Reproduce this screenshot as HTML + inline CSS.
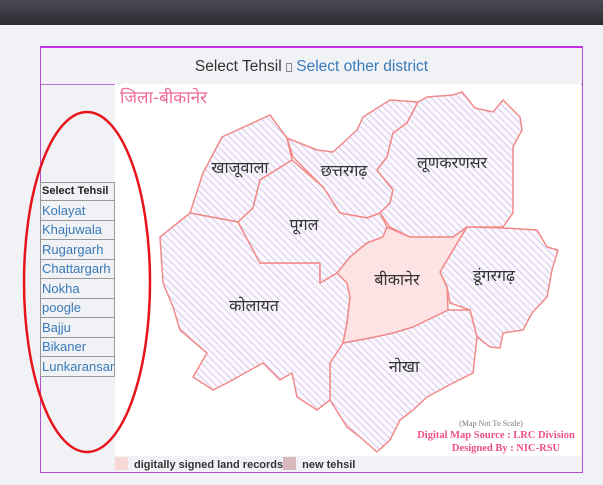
<!DOCTYPE html>
<html><head><meta charset="utf-8"><style>
*{margin:0;padding:0;box-sizing:border-box}
body{width:603px;height:485px;background:#f0f2f5;font-family:"Liberation Sans",sans-serif;position:relative;overflow:hidden}
.hdr{position:absolute;left:0;top:0;width:603px;height:25px;background:linear-gradient(#4a4b55,#2c2d33)}
.box{position:absolute;left:40px;top:46px;width:543px;height:427px;border:1px solid #b44fd0;border-top:2px solid #c030e0}
.title{position:absolute;left:0;top:0;width:541px;height:37px;border-bottom:1px solid #c070d8;text-align:center;font-size:15.5px;line-height:37px;color:#333}
.title a{color:#3a7ab8;text-decoration:none}
.map{position:absolute;left:115px;top:84px;width:466px;height:372px;background:#fff}
table{position:absolute;left:40px;top:182px;border-collapse:collapse;font-size:13px;table-layout:fixed;width:75px}
td{border:1px solid #999;height:19.5px;padding:0 1px;color:#3a7ab8;line-height:17px;white-space:nowrap;overflow:visible}
td.h{font-weight:bold;color:#222;font-size:11px;height:17px}
.leg{position:absolute;left:115px;top:457px;font-size:11px;font-weight:bold;color:#333}
</style></head><body>
<div class="hdr"></div>
<div class="box"><div class="title">Select Tehsil <span style="font-size:9px;border:1px solid #888;display:inline-block;width:6px;height:9px;vertical-align:-1px"></span> <a>Select other district</a></div></div>
<div class="map"></div>
<svg style="position:absolute;left:0;top:0" width="603" height="485">
<defs><pattern id="h" width="5" height="5" patternUnits="userSpaceOnUse" patternTransform="rotate(-45)"><rect width="5" height="5" fill="#fbf9fd"/><line x1="0" y1="0" x2="0" y2="5" stroke="#d6c8ec" stroke-width="2"/></pattern></defs>
<g stroke="#f28a8a" stroke-width="1.5" stroke-linejoin="round">
<polygon fill="url(#h)" points="190,213 203,173 222,137 270,115 287,138 292,160 260,180 253,208 238,222"/>
<polygon fill="url(#h)" points="287,138 317,150 333,152 357,130 363,117 390,100 418,102 407,123 393,133 387,157 377,170 393,190 390,203 380,213 367,218 340,213 323,187 293,157"/>
<polygon fill="url(#h)" points="418,102 427,97 453,95 462,92 475,108 493,112 503,100 520,117 522,130 513,147 513,213 503,227 467,227 453,237 410,237 390,227 380,213 390,203 393,190 377,170 387,157 393,133 407,123"/>
<polygon fill="url(#h)" points="467,227 503,228 537,230 547,247 558,250 552,270 547,297 532,313 523,330 503,333 500,348 490,347 477,337 470,310 450,303 447,287 440,272 453,250"/>
<polygon fill="url(#h)" points="343,343 370,338 393,333 413,327 448,310 470,310 477,337 473,373 453,383 427,397 413,410 400,420 390,440 377,452 360,437 347,427 330,400 330,363"/>
<polygon fill="url(#h)" points="160,237 190,213 238,222 260,263 320,263 320,283 337,273 347,283 350,297 347,323 343,343 330,363 330,400 317,410 297,397 292,373 280,380 263,363 227,383 213,390 193,377 207,353 180,330 173,307 163,283"/>
<polygon fill="url(#h)" points="238,222 253,208 260,180 292,160 323,187 340,213 367,218 380,213 387,227 383,237 367,243 350,257 337,273 320,283 320,263 260,263"/>
<polygon fill="#fde3e3" points="387,227 410,237 453,237 467,227 453,250 440,272 447,287 448,310 413,327 393,333 370,338 343,343 347,323 350,297 347,283 337,273 350,257 367,243 383,237"/>
</g>
<g font-family="'DejaVu Sans',sans-serif" font-size="16" fill="#333" text-anchor="middle">
<text x="240" y="173">खाजूवाला</text><text x="344" y="176">छत्तरगढ़</text><text x="452" y="168">लूणकरणसर</text><text x="304" y="230">पूगल</text><text x="397" y="285">बीकानेर</text><text x="494" y="281">डूंगरगढ़</text><text x="254" y="311">कोलायत</text><text x="404" y="372">नोखा</text>
</g>
<text x="120" y="103" font-family="'DejaVu Sans',sans-serif" font-size="17" fill="#f06a9a">जिला-बीकानेर</text>
<g font-family="'Liberation Serif',serif" text-anchor="middle">
<text x="491" y="426" font-size="8" fill="#777">(Map Not To Scale)</text>
<text x="496" y="438" font-size="10.5" font-weight="bold" fill="#ee4f8a">Digital Map Source : LRC Division</text>
<text x="506" y="451" font-size="10.5" font-weight="bold" fill="#ee4f8a">Designed By : NIC-RSU</text>
</g>
</svg>
<table>
<tr><td class="h">Select Tehsil</td></tr>
<tr><td>Kolayat</td></tr><tr><td>Khajuwala</td></tr><tr><td>Rugargarh</td></tr><tr><td>Chattargarh</td></tr><tr><td>Nokha</td></tr><tr><td>poogle</td></tr><tr><td>Bajju</td></tr><tr><td>Bikaner</td></tr><tr><td>Lunkaransar</td></tr>
</table>
<div class="leg"><span style="display:inline-block;width:13px;height:13px;background:#f8d7d7;vertical-align:-2px;margin-right:6px"></span>digitally signed land records<span style="display:inline-block;width:13px;height:13px;background:#d8b8bc;vertical-align:-2px;margin-right:6px"></span>new tehsil</div>
<svg style="position:absolute;left:0;top:0" width="603" height="485"><ellipse cx="87" cy="282" rx="63" ry="170" fill="none" stroke="#e8141c" stroke-width="2.5"/></svg>
</body></html>
